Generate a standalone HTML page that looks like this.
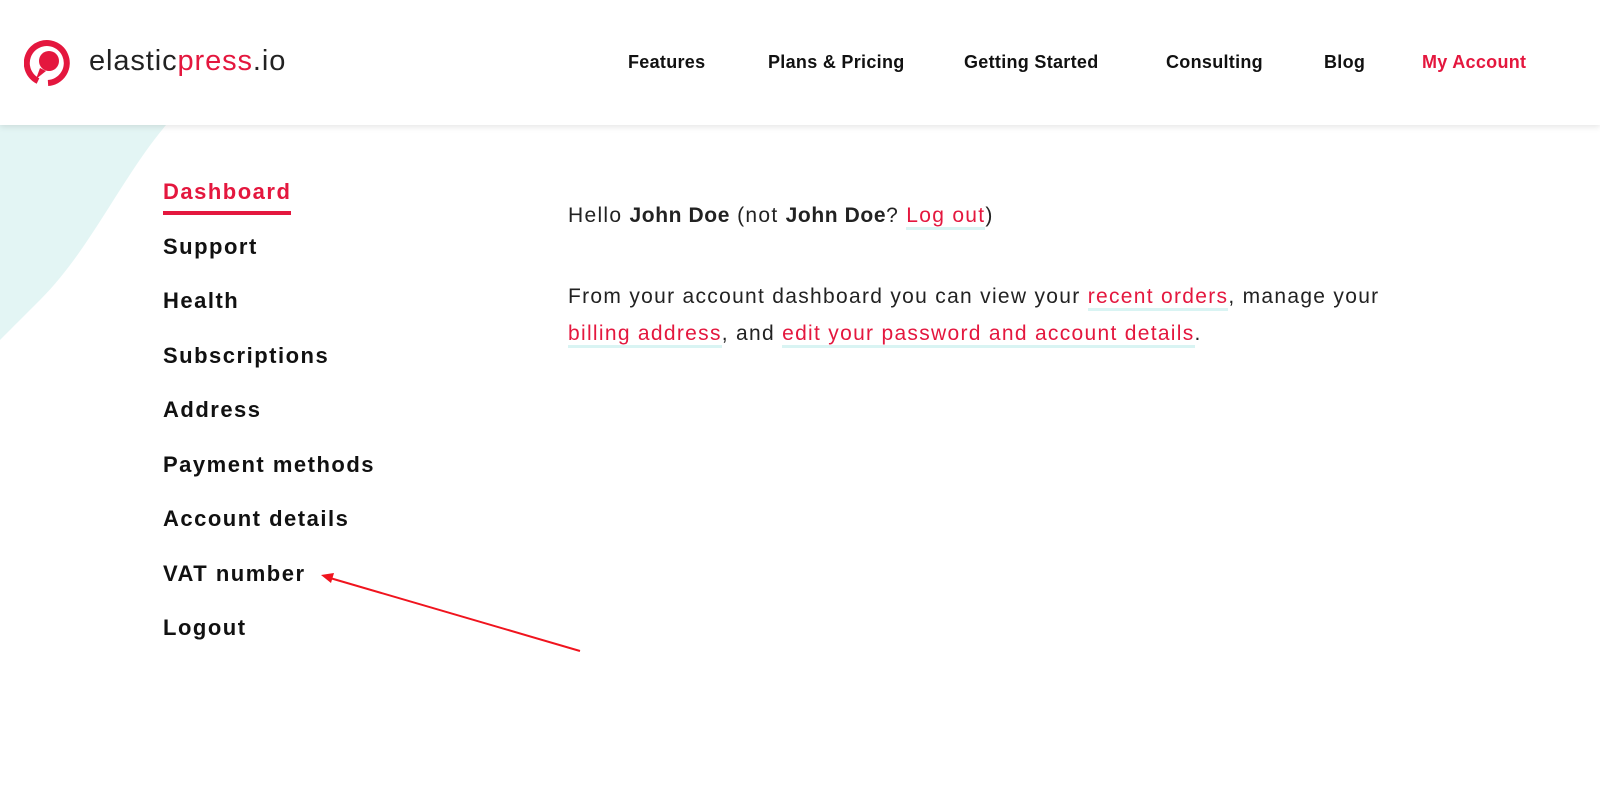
<!DOCTYPE html>
<html><head><meta charset="utf-8"><style>
body{margin:0;width:1600px;height:801px;background:#fff;position:relative;overflow:hidden;font-family:"Liberation Sans",sans-serif}
.hdr{position:absolute;left:0;top:0;width:1600px;height:125px;background:#fff;box-shadow:0 2px 6px rgba(0,0,0,.1);z-index:2}
.nav{position:absolute;top:52px;font-weight:bold;font-size:18px;color:#111;letter-spacing:.3px}
.menu{position:absolute;left:163px;font-weight:bold;font-size:22px;color:#111;letter-spacing:1.5px}
.txt{position:absolute;left:568px;font-size:21px;color:#222;line-height:37px;letter-spacing:1.3px}
.r{color:#e4173e;border-bottom:3px solid #d9f4f3}
b{color:#222;letter-spacing:.6px}
</style></head><body>
<svg style="position:absolute;left:0;top:0" width="1600" height="801">
<path d="M0 125 L166 125 C120 180 90 250 40 300 C25 315 10 330 0 340 Z" fill="#e3f5f4"/>
<line x1="580" y1="651" x2="330" y2="578" stroke="#f0141e" stroke-width="2"/>
<path d="M321 575 L334 573 L331 583 Z" fill="#f0141e"/>
</svg>
<div class="hdr">
<svg style="position:absolute;left:24px;top:39px" width="48" height="48" viewBox="0 0 48 48">
<path d="M14 42 A20 20 0 1 1 24 44" fill="none" stroke="#e4173e" stroke-width="6"/>
<circle cx="25" cy="22" r="10" fill="#e4173e"/>
<path d="M16 29 L12 40 L22 32 Z" fill="#e4173e"/>
</svg>
<div style="position:absolute;left:89px;top:45px;font-size:29px;color:#222;letter-spacing:.9px">elastic<span style="color:#e4173e">press</span>.io</div>
<div class="nav" style="left:628px">Features</div>
<div class="nav" style="left:768px">Plans &amp; Pricing</div>
<div class="nav" style="left:964px">Getting Started</div>
<div class="nav" style="left:1166px">Consulting</div>
<div class="nav" style="left:1324px">Blog</div>
<div class="nav" style="left:1422px;color:#e4173e">My Account</div>
</div>
<div class="menu" style="top:179px;color:#e4173e;border-bottom:4px solid #e4173e;padding-bottom:6px">Dashboard</div>
<div class="menu" style="top:234px">Support</div>
<div class="menu" style="top:288px">Health</div>
<div class="menu" style="top:343px">Subscriptions</div>
<div class="menu" style="top:397px">Address</div>
<div class="menu" style="top:452px">Payment methods</div>
<div class="menu" style="top:506px">Account details</div>
<div class="menu" style="top:561px">VAT number</div>
<div class="menu" style="top:615px">Logout</div>
<div class="txt" style="top:197px">Hello <b>John Doe</b> (not <b>John Doe</b>? <span class="r">Log out</span>)</div>
<div class="txt" style="top:278px">From your account dashboard you can view your <span class="r">recent orders</span>, manage your<br><span class="r">billing address</span>, and <span class="r">edit your password and account details</span>.</div>
</body></html>
